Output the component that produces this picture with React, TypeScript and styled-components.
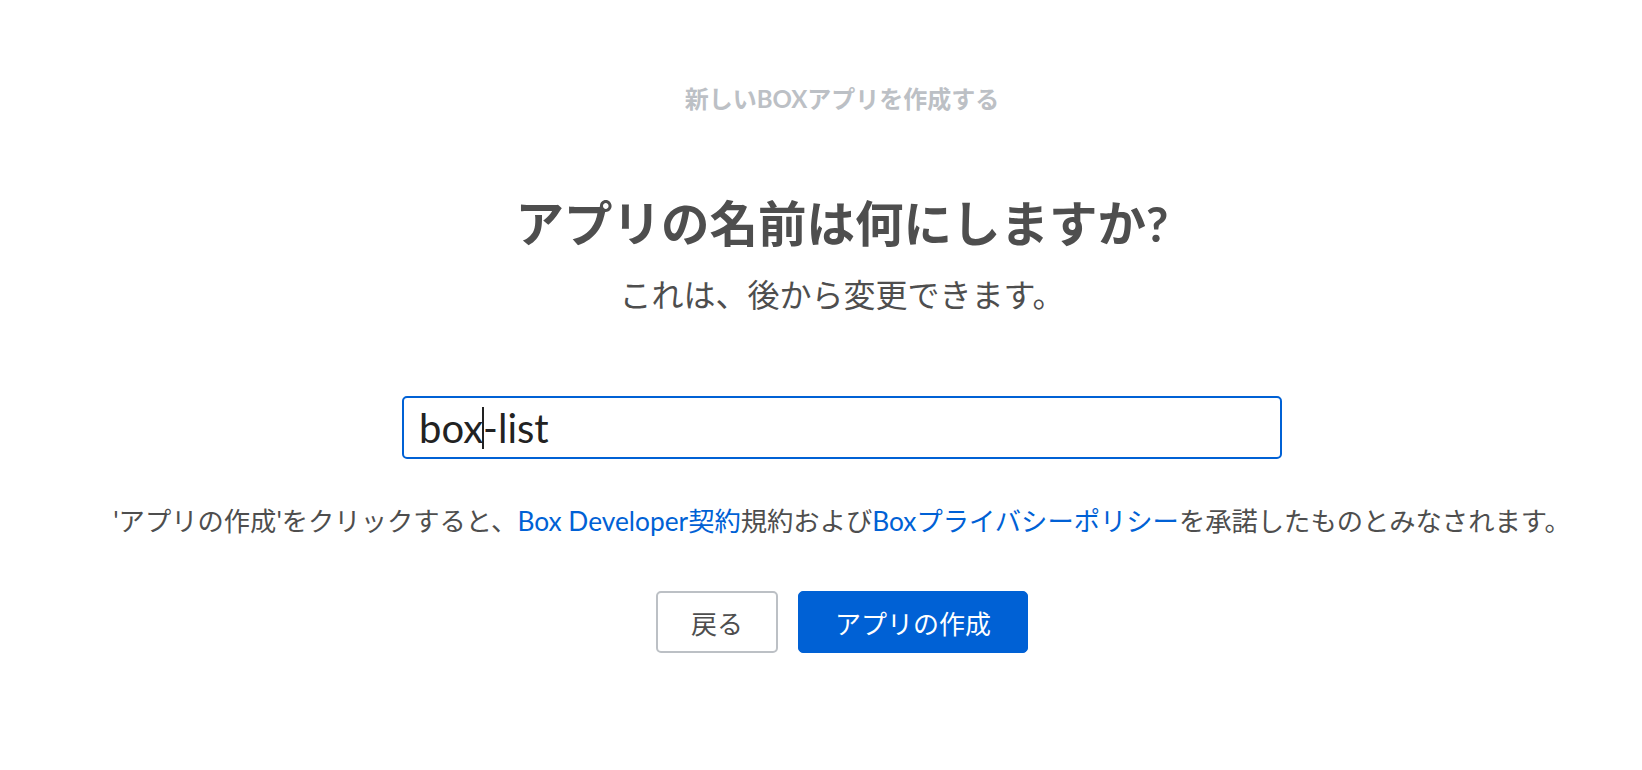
import React from 'react';
import styled, { createGlobalStyle } from 'styled-components';

const GlobalStyle = createGlobalStyle`
  html, body {
    margin: 0;
    padding: 0;
    background: #fff;
  }
  body {
    font-family: Lato, 'Noto Sans CJK JP', sans-serif;
    color: #4e4e4e;
  }
`;

const Page = styled.main`
  display: flex;
  flex-direction: column;
  align-items: center;
  padding: 84px 0 0 42px;
`;

const Eyebrow = styled.div`
  font-size: 24px;
  line-height: 30px;
  font-weight: 700;
  color: #bcc0c5;
`;

const Heading = styled.h1`
  margin: 80px 0 0;
  font-size: 48.5px;
  line-height: 58px;
  font-weight: 700;
  color: #4e4e4e;
`;

const SubHeading = styled.p`
  margin: 24px 0 0;
  font-size: 32px;
  line-height: 38px;
  color: #4e4e4e;
`;

const NameField = styled.div`
  box-sizing: border-box;
  margin-top: 82px;
  width: 880px;
  height: 63px;
  display: flex;
  align-items: center;
  padding: 0 15px;
  border: 2px solid #0061d5;
  border-radius: 5px;
  font-size: 40px;
  color: #222;
`;

const Caret = styled.span`
  display: inline-block;
  width: 2px;
  height: 42px;
  margin: 0 -1px;
  background: #222;
`;

const Terms = styled.p`
  margin: 46px 0 0;
  font-size: 26.3px;
  line-height: 32px;
  color: #4e4e4e;
  white-space: nowrap;
`;

const TermsLink = styled.a`
  color: #0061d5;
  text-decoration: none;
`;

const Actions = styled.div`
  display: flex;
  gap: 20px;
  margin-top: 54px;
`;

const Button = styled.button<{ primary?: boolean }>`
  box-sizing: border-box;
  height: 62px;
  padding: 0 ${({ primary }) => (primary ? 36 : 33)}px;
  font-family: inherit;
  font-size: 26px;
  border-radius: 5px;
  cursor: pointer;
  border: ${({ primary }) => (primary ? '1px solid #0061d5' : '2px solid #bcc0c5')};
  background: ${({ primary }) => (primary ? '#0061d5' : '#fff')};
  color: ${({ primary }) => (primary ? '#fff' : '#4e4e4e')};
`;

const App = () => (
  <>
    <GlobalStyle />
    <Page>
      <Eyebrow>新しいBOXアプリを作成する</Eyebrow>
      <Heading>アプリの名前は何にしますか?</Heading>
      <SubHeading>これは、後から変更できます。</SubHeading>
      <NameField>
        box
        <Caret />
        -list
      </NameField>
      <Terms>
        'アプリの作成'をクリックすると、
        <TermsLink href="#">Box Developer契約</TermsLink>
        規約および
        <TermsLink href="#">Boxプライバシーポリシー</TermsLink>
        を承諾したものとみなされます。
      </Terms>
      <Actions>
        <Button>戻る</Button>
        <Button primary>アプリの作成</Button>
      </Actions>
    </Page>
  </>
);

export default App;
